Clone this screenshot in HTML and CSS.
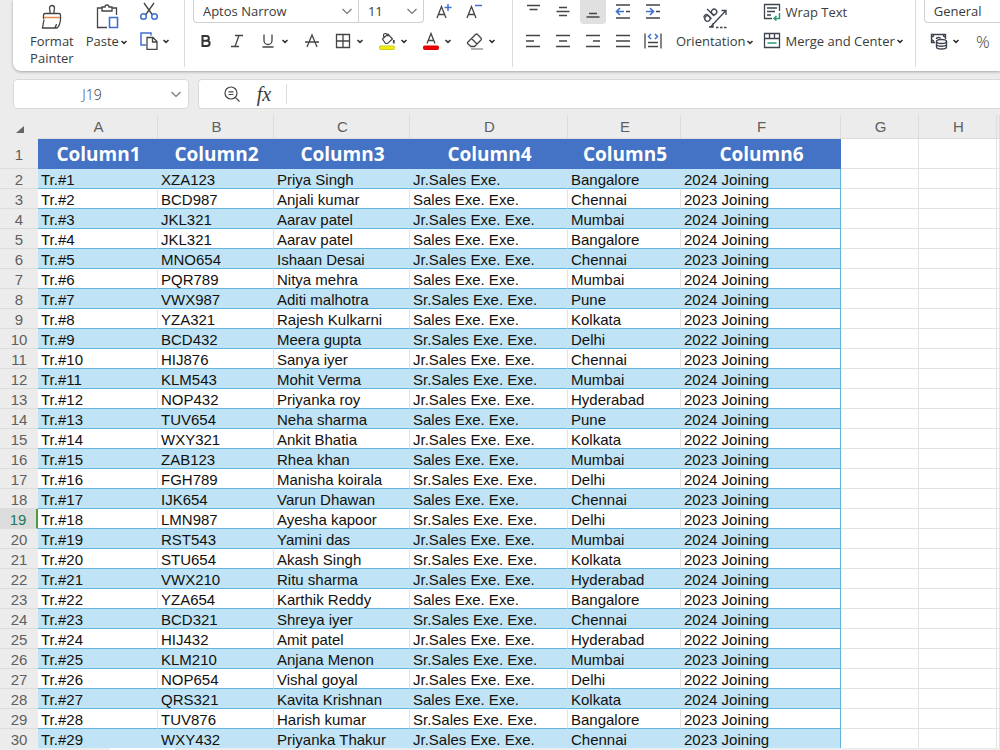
FILE: index.html
```html
<!DOCTYPE html>
<html lang="en">
<head>
    <meta charset="UTF-8">
    <meta name="viewport" content="width=device-width, initial-scale=1.0">
    <title>Spreadsheet</title>
    <link rel="stylesheet" href="styles.css">
</head>
<body>

    <!-- Shared chevrons -->
    <svg class="symbols" aria-hidden="true">
        <symbol id="caret" viewBox="0 0 8 8"><path d="M1.5 3l2.5 2.3L6.5 3" fill="none" stroke="#333" stroke-width="1.6"/></symbol>
        <symbol id="chevron" viewBox="0 0 12 12"><path d="M1.5 4L6 8.500 10.500 4" fill="none" stroke="#777" stroke-width="1.2"/></symbol>
    </svg>

    <!-- Ribbon -->
    <div class="ribbon">
        <div class="group clipboard">
            <button class="big-button" type="button">
                <svg width="24" height="26" viewBox="0 0 24 26" fill="none" stroke="#444" stroke-width="1.3">
                    <path d="M10 10.500V8.500L9.500 5a2.500 2.500 0 0 1 5 0L14 8.500v2M3.500 16v-4q0-1.500 1.500-1.500h14q1.500 0 1.500 1.500v4M4 16.500L2.500 25H17q3-2 3.500-9M14.500 25q1.500-1.500 2-4"/>
                    <path d="M4 14.500h16" stroke="#e58b55" stroke-width="1.6"/>
                </svg>
                <span>Format<br>Painter</span>
            </button>
            <button class="big-button" type="button">
                <svg width="24" height="26" viewBox="0 0 24 26" fill="none" stroke="#444" stroke-width="1.3">
                    <path d="M7 5H2.500v19.500H12M17 5h4.500v7M7 8V4h3q0-2 2-2t2 2h3v4z"/>
                    <path d="M14.500 14.500h8v10h-8z" stroke="#3f6fd1" stroke-width="1.6"/>
                </svg>
                <span>Paste<svg class="caret"><use href="#caret"/></svg></span>
            </button>
            <div class="stack">
                <button class="tool" type="button" aria-label="Cut">
                    <svg width="20" height="20" viewBox="0 0 20 20" fill="none" stroke="#444" stroke-width="1.3">
                        <path d="M5 1l8.500 12M15 1L6.500 13"/>
                        <g stroke="#3f6fd1" stroke-width="1.5"><circle cx="4.500" cy="14.500" r="2.800"/><circle cx="15.500" cy="14.500" r="2.800"/></g>
                    </svg>
                </button>
                <button class="tool drop" type="button" aria-label="Copy">
                    <svg width="18" height="18" viewBox="0 0 18 18" fill="none" stroke="#444" stroke-width="1.3">
                        <path d="M6 13H1V1h10v2.500" stroke="#3f6fd1" stroke-width="1.5"/>
                        <path d="M7 5.500h6l4 4v8H7zM12.500 5.500V10H17"/>
                    </svg>
                    <svg class="caret"><use href="#caret"/></svg>
                </button>
            </div>
        </div>

        <div class="group font">
            <div class="row">
                <div class="combo-pair">
                    <div class="combo font-name">
                        <select aria-label="Font"><option>Aptos Narrow</option></select>
                        <svg class="chevron"><use href="#chevron"/></svg>
                    </div>
                    <div class="combo font-size">
                        <select aria-label="Font size"><option>11</option></select>
                        <svg class="chevron"><use href="#chevron"/></svg>
                    </div>
                </div>
                <button class="tool" type="button" aria-label="Increase font size">
                    <svg width="18" height="18" viewBox="0 0 18 18" fill="none" stroke="#444" stroke-width="1.3">
                        <path d="M2 15L6.500 3.500 11 15M3.500 11.500h6"/>
                        <path d="M9.500 4.500h7M13 1v7" stroke="#3f6fd1" stroke-width="1.5"/>
                    </svg>
                </button>
                <button class="tool" type="button" aria-label="Decrease font size">
                    <svg width="18" height="18" viewBox="0 0 18 18" fill="none" stroke="#444" stroke-width="1.3">
                        <path d="M2 15L6.500 3.500 11 15M3.500 11.500h6"/>
                        <path d="M10 2.500h7" stroke="#3f6fd1" stroke-width="1.5"/>
                    </svg>
                </button>
            </div>
            <div class="row format">
                <button class="tool" type="button" aria-label="Bold">
                    <svg width="18" height="18" viewBox="0 0 18 18" fill="none" stroke="#333" stroke-width="2"><path d="M5.500 4h4a2.300 2.300 0 0 1 0 4.700h-4zM5.500 8.700h4.500a2.600 2.600 0 0 1 0 5.300H5.500z"/></svg>
                </button>
                <button class="tool" type="button" aria-label="Italic">
                    <svg width="18" height="18" viewBox="0 0 18 18" fill="none" stroke="#444" stroke-width="1.3"><path d="M7 3.500h8M3 14.500h8M11 3.500l-4 11"/></svg>
                </button>
                <button class="tool drop" type="button" aria-label="Underline">
                    <svg width="18" height="18" viewBox="0 0 18 18" fill="none" stroke="#444" stroke-width="1.3"><path d="M5 2.500v6a4 4 0 0 0 8 0v-6M3.500 15h11"/></svg>
                    <svg class="caret"><use href="#caret"/></svg>
                </button>
                <button class="tool" type="button" aria-label="Strikethrough">
                    <svg width="18" height="18" viewBox="0 0 18 18" fill="none" stroke="#444" stroke-width="1.3"><path d="M4 15L9 3l5 12M2 10h14"/></svg>
                </button>
                <button class="tool drop" type="button" aria-label="Borders">
                    <svg width="18" height="18" viewBox="0 0 18 18" fill="none" stroke="#444" stroke-width="1.3"><path d="M2.500 2.500h13v13h-13zM9 2.500v13M2.500 9h13"/></svg>
                    <svg class="caret"><use href="#caret"/></svg>
                </button>
                <button class="tool drop" type="button" aria-label="Fill color">
                    <svg width="18" height="18" viewBox="0 0 18 18" fill="none" stroke="#444" stroke-width="1.2">
                        <path d="M4.500 7L10 2l4.500 5-5 4.500h-2zM6 5.500q-1.500-4 1.500-4 2 0 2.500 3"/>
                        <path d="M15.800 8v3.500" stroke-width="1.8"/>
                        <rect x="1.500" y="14" width="15" height="3.500" rx="1" fill="#f2ee0c" stroke="#cccb23" stroke-width="1"/>
                    </svg>
                    <svg class="caret"><use href="#caret"/></svg>
                </button>
                <button class="tool drop" type="button" aria-label="Font color">
                    <svg width="18" height="18" viewBox="0 0 18 18" fill="none" stroke="#444" stroke-width="1.3">
                        <path d="M5 11.500L9 1.500l4 10M6.300 8.500h5.400"/>
                        <rect x="1.500" y="14" width="15" height="3.500" rx="1" fill="#f00000" stroke="#d00" stroke-width="1"/>
                    </svg>
                    <svg class="caret"><use href="#caret"/></svg>
                </button>
                <button class="tool drop" type="button" aria-label="Clear">
                    <svg width="18" height="18" viewBox="0 0 18 18" fill="none" stroke="#444" stroke-width="1.3">
                        <path d="M1.500 10.500l8-8q1-1 2 0L15 6q1 1 0 2l-6.500 6.500H5l-3.500-3zM5.500 6.500L11 12"/>
                        <path d="M5 17h12" stroke="#888"/>
                    </svg>
                    <svg class="caret"><use href="#caret"/></svg>
                </button>
            </div>
        </div>

        <div class="group align">
            <div class="align-grid">
                <button class="tool" type="button" aria-label="Top align"><svg width="16" height="16" viewBox="0 0 16 16" stroke="#444" stroke-width="1.3"><path d="M2 1.500h13M4.500 5.500h8"/></svg></button>
                <button class="tool" type="button" aria-label="Middle align"><svg width="16" height="16" viewBox="0 0 16 16" stroke="#444" stroke-width="1.3"><path d="M4 3.500h8M1.500 7.500h13M4 11.500h8"/></svg></button>
                <button class="tool selected" type="button" aria-label="Bottom align"><svg width="16" height="16" viewBox="0 0 16 16" stroke="#444" stroke-width="1.3"><path d="M4 9.500h8M1.500 13h13"/></svg></button>
                <button class="tool" type="button" aria-label="Decrease indent"><svg width="16" height="16" viewBox="0 0 16 16" fill="none" stroke="#444" stroke-width="1.3"><path d="M1 1h14M1 14h14M11 7.500h4"/><path d="M9 7.500H2M5 4L1.500 7.500 5 11" stroke="#3f6fd1" stroke-width="1.6"/></svg></button>
                <button class="tool" type="button" aria-label="Increase indent"><svg width="16" height="16" viewBox="0 0 16 16" fill="none" stroke="#444" stroke-width="1.3"><path d="M1 1h14M1 14h14M11 7.500h4"/><path d="M1 7.500h7M5 4l3.500 3.500L5 11" stroke="#3f6fd1" stroke-width="1.6"/></svg></button>
                <button class="tool" type="button" aria-label="Align left"><svg width="16" height="16" viewBox="0 0 16 16" stroke="#444" stroke-width="1.3"><path d="M1 2.500h14M1 8h8M1 13.500h14"/></svg></button>
                <button class="tool" type="button" aria-label="Center"><svg width="16" height="16" viewBox="0 0 16 16" stroke="#444" stroke-width="1.3"><path d="M1 2.500h14M4 8h8M1 13.500h14"/></svg></button>
                <button class="tool" type="button" aria-label="Align right"><svg width="16" height="16" viewBox="0 0 16 16" stroke="#444" stroke-width="1.3"><path d="M1 2.500h14M8 8h7M1 13.500h14"/></svg></button>
                <button class="tool" type="button" aria-label="Justify"><svg width="16" height="16" viewBox="0 0 16 16" stroke="#444" stroke-width="1.3"><path d="M1 2.500h14M1 8h14M1 13.500h14"/></svg></button>
                <button class="tool" type="button" aria-label="Distribute"><svg width="18" height="16" viewBox="0 0 18 16" fill="none" stroke="#444" stroke-width="1.3"><path d="M1 .5v15M17 .5v15M4 9.500h10M4 13.500h10"/><path d="M7 1L4.500 3.500 7 6M11 1l2.500 2.500L11 6" stroke="#3f6fd1" stroke-width="1.5"/></svg></button>
            </div>
            <button class="big-button" type="button">
                <svg width="26" height="26" viewBox="0 0 26 26" fill="none" stroke="#3d4450" stroke-width="1.3">
                    <g transform="rotate(-45 9 12)"><circle cx="4" cy="12" r="2.700"/><path d="M2 8.500q4.700-2 4.700 2V15M10.500 5v10"/><circle cx="13.400" cy="12" r="2.700"/></g>
                    <path d="M8 24.500L24 7.500M19.500 7.500H24V12M7 24h4v-4M14 24.500h2.500M18 24.500h2.500M22 24.500h2.500"/>
                </svg>
                <span>Orientation<svg class="caret"><use href="#caret"/></svg></span>
            </button>
            <div class="stack labels">
                <button class="label-button" type="button">
                    <svg class="icon" width="18" height="18" viewBox="0 0 18 18" fill="none" stroke="#3d4450" stroke-width="1.3">
                        <path d="M9 15.500H1.500v-14h15V8M4 5h10M4 8.500h8M4 12h4"/>
                        <path d="M16.500 10v5.500h-5M13.500 13L11 15.500l2.500 2" stroke="#2b9a78" stroke-width="1.5"/>
                    </svg>
                    Wrap Text
                </button>
                <button class="label-button" type="button">
                    <svg class="icon" width="18" height="18" viewBox="0 0 18 18" fill="none" stroke="#3d4450" stroke-width="1.3">
                        <path d="M1.500 1.500h15v14h-15zM1.500 6.500h15M6.500 1.500v5M11.500 1.500v5"/>
                        <path d="M4.500 11h9" stroke="#2b9a78" stroke-width="1.5"/>
                    </svg>
                    Merge and Center<svg class="caret"><use href="#caret"/></svg>
                </button>
            </div>
        </div>

        <div class="group number">
            <div class="row">
                <div class="combo number-format">
                    <select aria-label="Number format"><option>General</option></select>
                    <svg class="chevron"><use href="#chevron"/></svg>
                </div>
            </div>
            <div class="row format">
                <button class="tool drop" type="button" aria-label="Currency">
                    <svg width="18" height="18" viewBox="0 0 18 18" fill="none" stroke="#3d4450" stroke-width="1.4">
                        <path d="M5 10.500H1.500v-8h14V7M1.500 5q2 0 2-2M15.500 5q-2 0-2-2M1.500 8q2 0 2 2"/><path d="M6.500 7q0-1.500 2-1.500t2 1"/>
                        <ellipse cx="11.500" cy="9.500" rx="5" ry="2"/><path d="M6.500 9.500v5.500q0 2 5 2t5-2V9.500M6.500 12.300q0 2 5 2t5-2"/>
                    </svg>
                    <svg class="caret"><use href="#caret"/></svg>
                </button>
                <button class="tool percent" type="button">%</button>
            </div>
        </div>
    </div>

    <!-- Formula bar -->
    <div class="formula-bar">
        <div class="name-box">
            <input type="text" value="J19" aria-label="Name box">
            <svg class="chevron"><use href="#chevron"/></svg>
        </div>
        <div class="formula-box">
            <button class="tool" type="button" aria-label="Zoom out">
                <svg width="18" height="18" viewBox="0 0 18 18" fill="none" stroke="#444" stroke-width="1.2"><circle cx="8" cy="8" r="6"/><path d="M12.300 12.300l4.200 4.200M5.500 6.800h5M5.500 9.500h5"/></svg>
            </button>
            <button class="tool fx" type="button" aria-label="Insert function">fx</button>
            <input type="text" aria-label="Formula">
        </div>
    </div>

    <!-- Sheet -->
    <main class="sheet">
        <table>
            <colgroup>
                <col class="col-head"><col class="col-a"><col class="col-b"><col class="col-c"><col class="col-d">
                <col class="col-e"><col class="col-f"><col class="col-g"><col class="col-h"><col>
            </colgroup>
            <thead>
                <tr>
                    <th><svg width="8" height="8" viewBox="0 0 8 8"><path d="M8 1v7H0z" fill="#666"/></svg></th>
                    <th>A</th><th>B</th><th>C</th><th>D</th><th>E</th><th>F</th><th>G</th><th>H</th><th></th>
                </tr>
            </thead>
            <tbody id="rows">
                <tr class="title-row">
                    <th>1</th>
                    <td>Column1</td><td>Column2</td><td>Column3</td><td>Column4</td><td>Column5</td><td>Column6</td>
                    <td></td><td></td><td></td>
                </tr>
            </tbody>
        </table>
    </main>

    <!-- Sheet tabs -->
    <footer class="tabs"><div class="tab"></div></footer>

    <script src="script.js"></script>

</body>
</html>
```
FILE: styles.css
```css
/* General */
* {
    box-sizing: border-box;
}

body {
    margin: 0;
    height: 100vh;
    display: flex;
    flex-direction: column;
    overflow: hidden;
    background-color: #ececec;
    color: #3b3b3b;
    font-family: "Open Sans", sans-serif;
    font-size: 13px;
}

button, input, select {
    font: inherit;
    color: inherit;
    border: none;
    background: none;
    padding: 0;
    margin: 0;
    outline: none;
}

button {
    cursor: pointer;
    white-space: nowrap;
}

select {
    appearance: none;
    flex: 1;
    min-width: 0;
}

svg {
    flex: none;
}

.symbols {
    display: none;
}

.caret {
    width: 8px;
    height: 8px;
}

.chevron {
    width: 12px;
    height: 12px;
}

/* Ribbon */
.ribbon {
    display: flex;
    flex: none;
    margin-left: 13px;
    padding-bottom: 4px;
    overflow: hidden;
    background-color: #fff;
    border-bottom-left-radius: 8px;
    box-shadow: 0 1px 3px rgba(0, 0, 0, 0.3);
}

.group {
    flex: none;
    border-right: 1px solid #dcdcdc;
}

.group:last-child {
    border-right: none;
}

.row {
    display: flex;
    align-items: center;
    height: 23px;
}

.row.format {
    height: 36px;
    gap: 1px;
}

.tool {
    display: flex;
    align-items: center;
    justify-content: center;
    gap: 4px;
    width: 30px;
    height: 24px;
}

.tool.drop {
    width: 43px;
}

.big-button {
    display: flex;
    flex-direction: column;
    align-items: center;
    gap: 4px;
    padding-top: 3px;
    line-height: 17px;
}

.big-button .caret {
    margin-left: 1px;
}

.stack {
    display: grid;
    grid-template-rows: 23px 36px;
    align-items: center;
}

/* Clipboard */
.clipboard {
    display: flex;
    padding: 0 7px 0 17px;
    gap: 12px;
}

.clipboard .stack {
    margin-left: -6px;
}

/* Font */
.font {
    width: 328px;
    padding-left: 8px;
}

.font .format {
    margin-left: -2px;
}

.combo-pair {
    display: flex;
    margin-right: 5px;
}

.combo {
    display: flex;
    align-items: center;
    height: 23px;
    padding: 0 5px 1px 9px;
    border: 1px solid #d0d0d0;
    border-top: none;
    border-radius: 0 0 4px 4px;
}

.font-name {
    width: 166px;
    border-bottom-right-radius: 0;
}

.font-size {
    width: 65px;
    border-left: none;
    border-bottom-left-radius: 0;
}

/* Alignment */
.align {
    display: flex;
    padding: 0 11px 0 7px;
}

.align-grid {
    display: grid;
    grid-template-columns: repeat(5, 26px);
    grid-template-rows: 23px 36px;
    column-gap: 4px;
    align-items: center;
    margin-right: 10px;
}

.align-grid .tool {
    width: 26px;
}

.selected {
    background-color: #e0e0e0;
    border-radius: 0 0 4px 4px;
}

.labels {
    margin-left: 9px;
}

.label-button {
    display: flex;
    align-items: center;
    gap: 1px;
}

.label-button .icon {
    margin-right: 3px;
}

/* Number */
.number {
    padding-left: 8px;
}

.number-format {
    width: 150px;
}

.percent {
    font-size: 17px;
    font-weight: 300;
}

/* Formula bar */
.formula-bar {
    display: flex;
    flex: none;
    gap: 9px;
    height: 30px;
    margin: 8px 0 6px 13px;
}

.name-box, .formula-box {
    display: flex;
    align-items: center;
    background-color: #fff;
    border: 1px solid #d9d9d9;
    border-radius: 4px;
}

.name-box {
    width: 176px;
    padding-right: 6px;
}

.name-box input {
    flex: 1;
    min-width: 0;
    font-size: 14px;
    font-weight: 300;
    text-align: center;
}

.formula-box {
    flex: 1;
    padding-left: 18px;
    border-right: none;
    border-radius: 4px 0 0 4px;
}

.fx {
    width: 34px;
    font-family: "Liberation Serif", serif;
    font-size: 20px;
    font-style: italic;
}

.formula-box input {
    flex: 1;
    height: 20px;
    margin-left: 5px;
    padding-left: 8px;
    border-left: 1px solid #dcdcdc;
}

/* Sheet */
.sheet {
    flex: 1;
    min-height: 0;
    overflow: hidden;
    font-family: "Liberation Sans", Arial, sans-serif;
    font-size: 15px;
}

table {
    width: 100%;
    table-layout: fixed;
    border-collapse: separate;
    border-spacing: 0;
}

.col-head { width: 38px; }
.col-a { width: 120px; }
.col-b { width: 116px; }
.col-c { width: 136px; }
.col-d { width: 158px; }
.col-e { width: 113px; }
.col-f { width: 160px; }
.col-g { width: 78px; }
.col-h { width: 78px; }

th, td {
    height: 20px;
    padding: 2px 0 0;
    line-height: 17px;
    white-space: nowrap;
}

th {
    background-color: #ececec;
    color: #5f5f5f;
    font-weight: normal;
}

thead th {
    height: 24px;
    padding: 0 0 0 2px;
    border-right: 1px solid #dcdcdc;
    border-bottom: 1px solid #dcdcdc;
}

thead th:first-child {
    border-right: none;
    border-bottom: none;
}

tbody th {
    border-bottom: 1px solid #dcdcdc;
}

td {
    padding-left: 3px;
    background-color: #fff;
    border-right: 1px solid #e3e3e3;
    border-bottom: 1px solid #e3e3e3;
    color: #111;
}

.data {
    border-bottom-color: #62b5dc;
}

.banded .data {
    background-color: #c0e4f5;
    border-right-color: #c0e4f5;
}

td.data:nth-child(7) {
    border-right-color: #62b5dc;
}

.title-row th, .title-row td {
    height: 30px;
}

.title-row td:nth-child(-n+7) {
    padding: 2px 0 0 2px;
    background-color: #4472c4;
    border-color: #4472c4;
    color: #fff;
    font-family: "Open Sans", sans-serif;
    font-size: 19px;
    font-weight: bold;
    text-align: center;
}

.current th {
    background-color: #dcdcdc;
    border-right: 2px solid #4d9a3f;
    color: #217a5b;
}

/* Sheet tabs */
.tabs {
    flex: none;
    height: 2px;
    padding-left: 110px;
}

.tab {
    width: 65px;
    height: 2px;
    background-color: #fff;
}
```
FILE: script.js
```js
const people = [
    ["XZA123", "Priya Singh", "Jr.Sales Exe.", "Bangalore", 2024],
    ["BCD987", "Anjali kumar", "Sales Exe. Exe.", "Chennai", 2023],
    ["JKL321", "Aarav patel", "Jr.Sales Exe. Exe.", "Mumbai", 2024],
    ["JKL321", "Aarav patel", "Sales Exe. Exe.", "Bangalore", 2024],
    ["MNO654", "Ishaan Desai", "Jr.Sales Exe. Exe.", "Chennai", 2023],
    ["PQR789", "Nitya mehra", "Sales Exe. Exe.", "Mumbai", 2024],
    ["VWX987", "Aditi malhotra", "Sr.Sales Exe. Exe.", "Pune", 2024],
    ["YZA321", "Rajesh Kulkarni", "Sales Exe. Exe.", "Kolkata", 2023],
    ["BCD432", "Meera gupta", "Sr.Sales Exe. Exe.", "Delhi", 2022],
    ["HIJ876", "Sanya iyer", "Jr.Sales Exe. Exe.", "Chennai", 2023],
    ["KLM543", "Mohit Verma", "Sr.Sales Exe. Exe.", "Mumbai", 2024],
    ["NOP432", "Priyanka roy", "Jr.Sales Exe. Exe.", "Hyderabad", 2023],
    ["TUV654", "Neha sharma", "Sales Exe. Exe.", "Pune", 2024],
    ["WXY321", "Ankit Bhatia", "Jr.Sales Exe. Exe.", "Kolkata", 2022],
    ["ZAB123", "Rhea khan", "Sales Exe. Exe.", "Mumbai", 2023],
    ["FGH789", "Manisha koirala", "Sr.Sales Exe. Exe.", "Delhi", 2024],
    ["IJK654", "Varun Dhawan", "Sales Exe. Exe.", "Chennai", 2023],
    ["LMN987", "Ayesha kapoor", "Sr.Sales Exe. Exe.", "Delhi", 2023],
    ["RST543", "Yamini das", "Jr.Sales Exe. Exe.", "Mumbai", 2024],
    ["STU654", "Akash Singh", "Sr.Sales Exe. Exe.", "Kolkata", 2023],
    ["VWX210", "Ritu sharma", "Jr.Sales Exe. Exe.", "Hyderabad", 2024],
    ["YZA654", "Karthik Reddy", "Sales Exe. Exe.", "Bangalore", 2023],
    ["BCD321", "Shreya iyer", "Sr.Sales Exe. Exe.", "Chennai", 2024],
    ["HIJ432", "Amit patel", "Jr.Sales Exe. Exe.", "Hyderabad", 2022],
    ["KLM210", "Anjana Menon", "Sr.Sales Exe. Exe.", "Mumbai", 2023],
    ["NOP654", "Vishal goyal", "Jr.Sales Exe. Exe.", "Delhi", 2022],
    ["QRS321", "Kavita Krishnan", "Sales Exe. Exe.", "Kolkata", 2024],
    ["TUV876", "Harish kumar", "Sr.Sales Exe. Exe.", "Bangalore", 2023],
    ["WXY432", "Priyanka Thakur", "Jr.Sales Exe. Exe.", "Chennai", 2023]
];

const currentRow = 19;
const rows = document.getElementById("rows");

people.forEach(function (person, i) {
    const tr = document.createElement("tr");
    const number = i + 2;
    if (i % 2 === 0) tr.classList.add("banded");
    if (number === currentRow) tr.classList.add("current");

    const [code, name, role, city, year] = person;
    const cells = ["Tr.#" + (i + 1), code, name, role, city, year + " Joining"];
    tr.innerHTML = "<th>" + number + "</th>" +
        cells.map(text => '<td class="data">' + text + "</td>").join("") +
        "<td></td><td></td><td></td>";
    rows.appendChild(tr);
});
```
